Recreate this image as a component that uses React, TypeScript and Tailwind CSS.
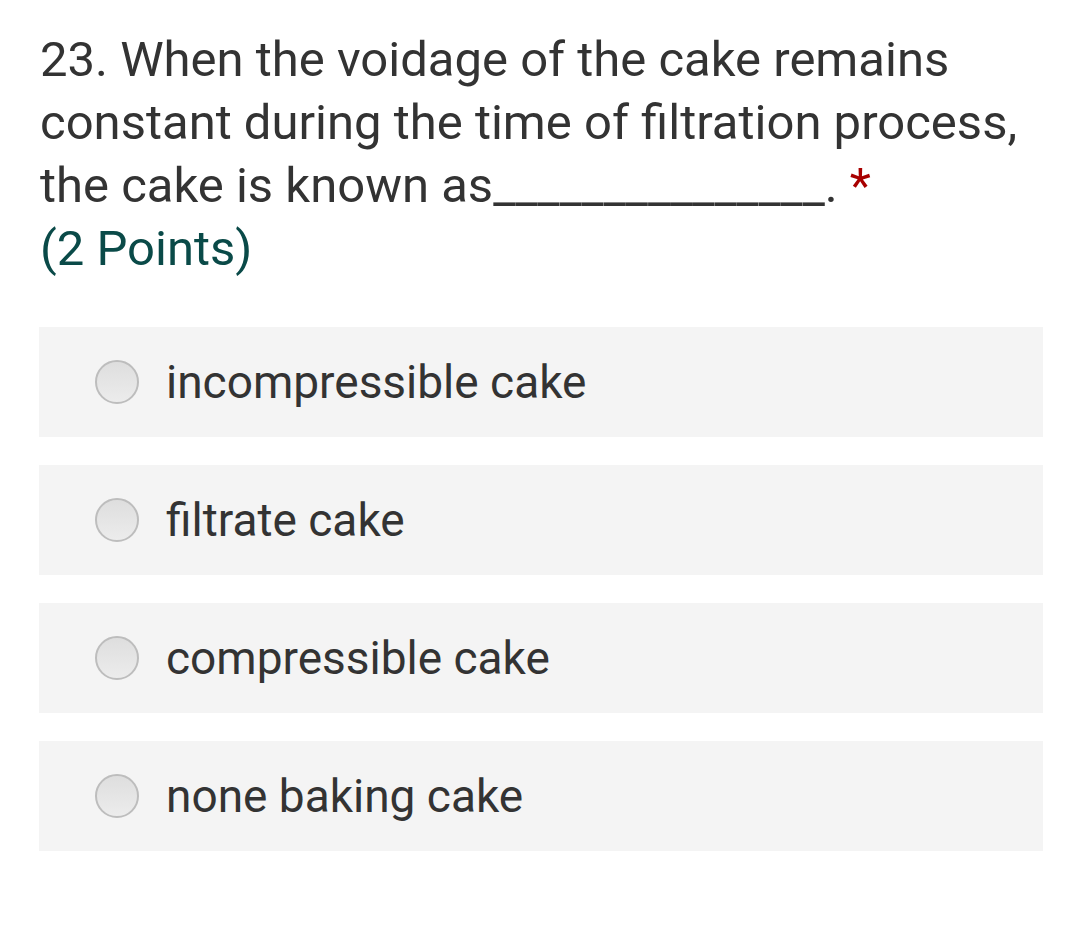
import React from "react";

const options = [
  "incompressible cake",
  "filtrate cake",
  "compressible cake",
  "none baking cake",
];

function Radio() {
  return (
    <span className="block h-[44px] w-[44px] shrink-0 rounded-full border-2 border-[#bdbdbd] bg-gradient-to-b from-[#dedede] to-[#ececec]" />
  );
}

export default function App() {
  return (
    <div
      className="min-h-[941px] w-[1080px] bg-white text-[#333333]"
      style={{ fontFamily: "Roboto, 'Noto Sans', sans-serif" }}
    >
      <div className="px-[40px] pt-[28px]">
        <div className="text-[49px] leading-[63px]">
          23. When the voidage of the cake remains constant during the time of
          filtration process, the cake is known as_______________.
          <span className="ml-[12px] text-[#a80000]">*</span>
        </div>
        <div className="text-[49px] leading-[63px] text-[#0a4a48]">(2 Points)</div>
      </div>

      <div className="mt-[47px] flex flex-col gap-[28px] pl-[39px] pr-[37px]">
        {options.map((opt) => (
          <label
            key={opt}
            className="flex h-[110px] items-center bg-[#f4f4f4] pl-[56px]"
          >
            <Radio />
            <span className="ml-[27px] text-[46px] leading-none">{opt}</span>
          </label>
        ))}
      </div>
    </div>
  );
}
